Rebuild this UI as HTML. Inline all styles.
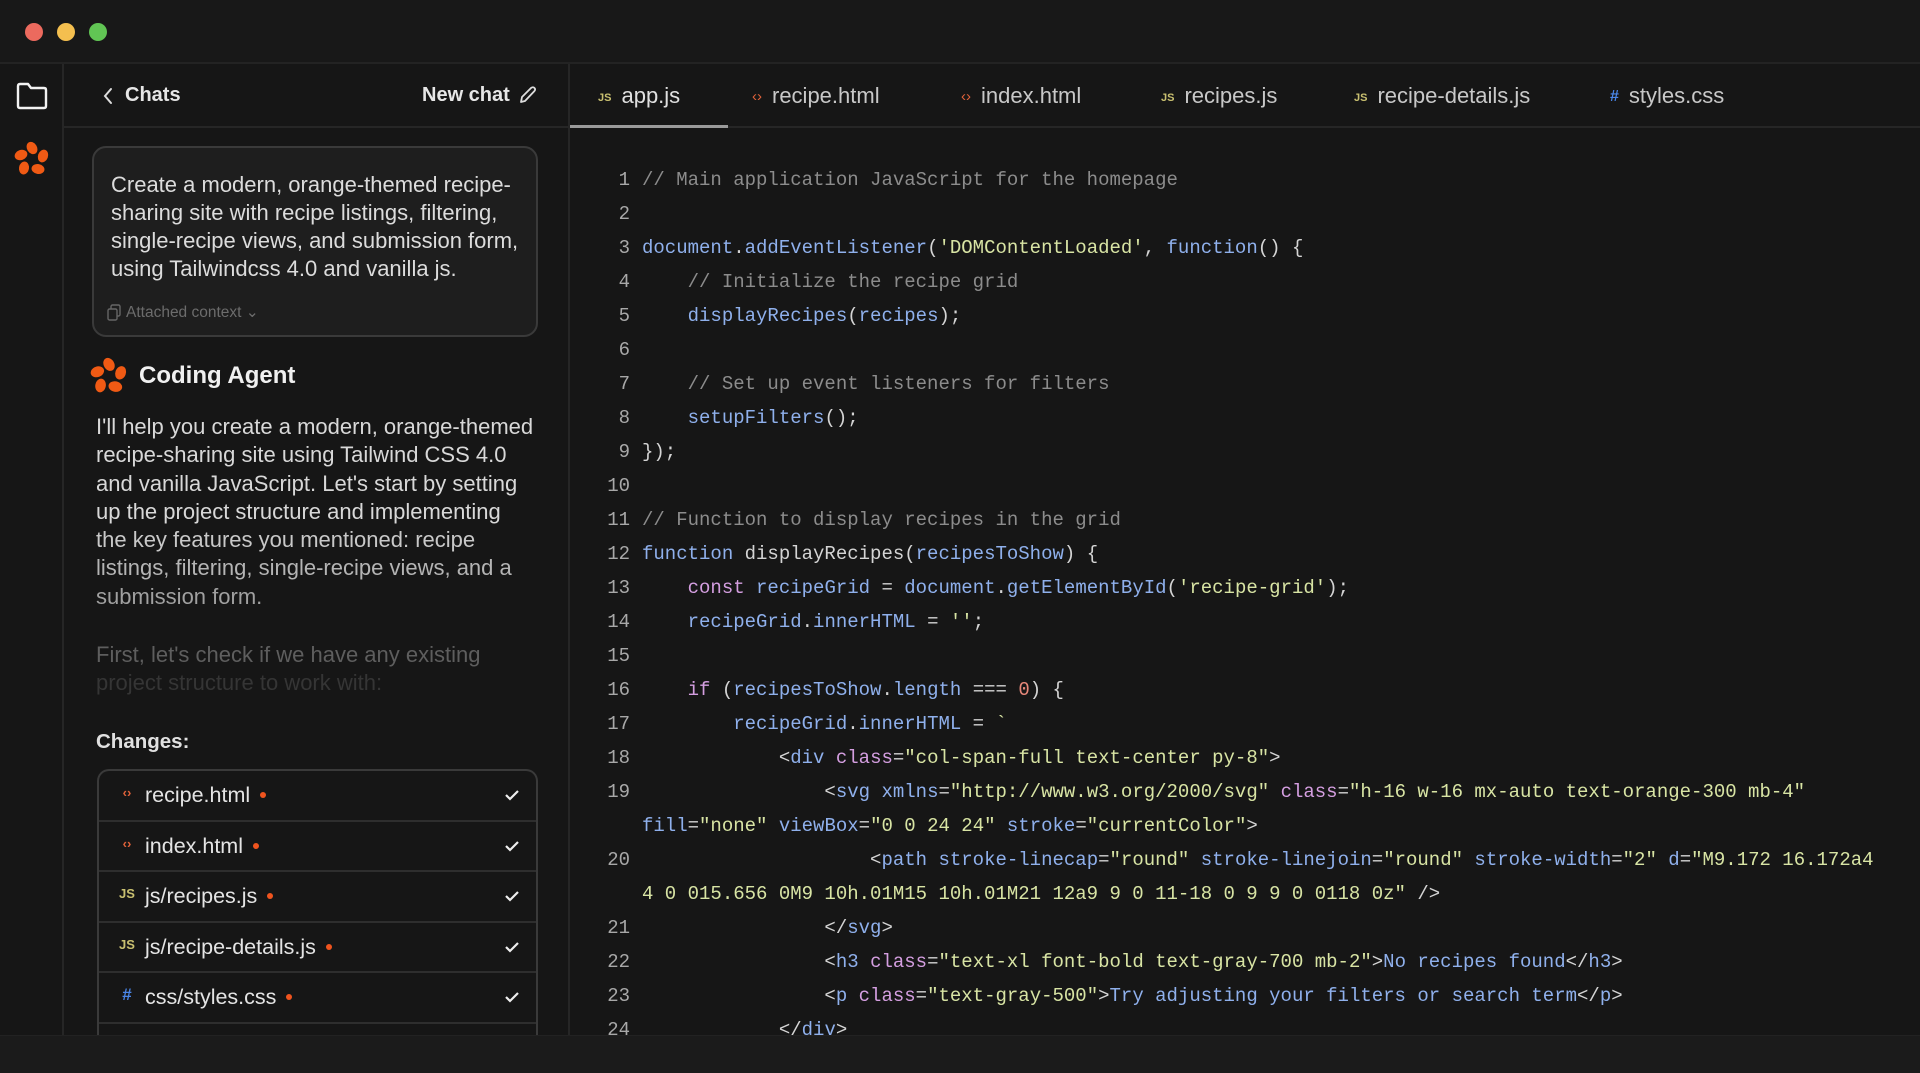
<!DOCTYPE html>
<html><head><meta charset="utf-8"><style>
*{margin:0;padding:0;box-sizing:border-box}
body{width:1920px;height:1073px;background:#161616;overflow:hidden;font-family:"Liberation Sans",sans-serif;color:#e8e8e8;position:relative}
.abs{position:absolute}
.dot{position:absolute;top:23px;width:18px;height:18px;border-radius:50%}
.tab{position:absolute;top:83px;font-size:22px;color:#c8c8c8;white-space:nowrap}
.tab i{font-style:normal;font-size:11px;font-weight:bold;margin-right:10px;vertical-align:2px}
.js{color:#c9c070}.ht{color:#e0623a}.cs{color:#4a86e8}
.code{position:absolute;left:600px;top:163px;font-family:"Liberation Mono",monospace;font-size:19px;line-height:34px;white-space:pre;color:#d4d4d4}
.ln{display:inline-block;width:30px;text-align:right;color:#a8a8a8;margin-right:12px}
.c{color:#8c8c8c}.b{color:#8fb0ec}.s{color:#d8e4a4}.k{color:#d49ee0}.n{color:#e8887a}
.row{position:absolute;left:0;right:0;height:50.5px;border-bottom:2px solid #2e2e2e;font-size:21.5px;color:#e4e4e4}
.row span.ic{position:absolute;left:18px;top:14px;font-size:13px;font-weight:bold;width:20px;text-align:center}
.row span.t{position:absolute;left:46px;top:12px;white-space:nowrap}
.row span.t b{display:inline-block;width:6px;height:6px;border-radius:50%;background:#f0541e;margin-left:10px;vertical-align:4px}
.row svg{position:absolute;right:16px;top:17px}
</style></head><body>
<div class="abs" style="left:0;top:0;width:1920px;height:64px;background:#181818;border-bottom:2px solid #232323"></div>
<div class="dot" style="left:25px;background:#ec6a5e"></div>
<div class="dot" style="left:57px;background:#f4bf4f"></div>
<div class="dot" style="left:89px;background:#61c554"></div>
<div class="abs" style="left:0;top:64px;width:64px;height:971px;border-right:2px solid #262626"></div>
<svg class="abs" style="left:16px;top:82px" width="32" height="28" viewBox="0 0 32 28"><path d="M2 4 Q2 2 4 2 H12 L15 6 H28 Q30 6 30 8 V24 Q30 26 28 26 H4 Q2 26 2 24 Z" fill="none" stroke="#f2f2f2" stroke-width="2.4" stroke-linejoin="round"/></svg>
<svg class="abs" style="left:14px;top:141px" width="36" height="36" viewBox="0 0 36 36" fill="#f05a14">
<ellipse cx="18" cy="7" rx="5" ry="6.5" transform="rotate(-30 18 7)"/>
<ellipse cx="29" cy="15" rx="5" ry="6.5" transform="rotate(20 29 15)"/>
<ellipse cx="24" cy="28" rx="6.5" ry="5" transform="rotate(10 24 28)"/>
<ellipse cx="10" cy="27" rx="5" ry="6.5" transform="rotate(10 10 27)"/>
<ellipse cx="7" cy="14" rx="6.5" ry="5" transform="rotate(-20 7 14)"/>
</svg>
<div class="abs" style="left:64px;top:64px;width:506px;height:971px;border-right:2px solid #262626"></div>
<div class="abs" style="left:64px;top:126px;width:505px;height:2px;background:#262626"></div>
<svg class="abs" style="left:102px;top:86px" width="12" height="20" viewBox="0 0 12 20"><path d="M9 3 L3 10 L9 17" fill="none" stroke="#ddd" stroke-width="2" stroke-linecap="round"/></svg>
<div class="abs" style="left:125px;top:84px;font-size:20px;font-weight:bold;color:#e6e6e6">Chats</div>
<div class="abs" style="left:422px;top:84px;font-size:20px;font-weight:bold;color:#e6e6e6">New chat</div>
<svg class="abs" style="left:517px;top:85px" width="20" height="22" viewBox="0 0 20 22"><path d="M4 17 L5 12 L14 3 Q16 1.5 17.5 3 Q19 4.5 17 6.5 L8 16 Z" fill="none" stroke="#ddd" stroke-width="1.8" stroke-linejoin="round"/></svg>
<div class="abs" style="left:92px;top:146px;width:446px;height:191px;border:2px solid #3a3a3a;border-radius:14px;background:#1e1e1e"></div>
<div class="abs" style="left:111px;top:171px;font-size:22px;line-height:28px;color:#dcdcdc;white-space:nowrap">Create a modern, orange-themed recipe-<br>sharing site with recipe listings, filtering,<br>single-recipe views, and submission form,<br>using Tailwindcss 4.0 and vanilla js.</div>
<svg class="abs" style="left:107px;top:304px" width="14" height="17" viewBox="0 0 14 17"><rect x="4" y="1" width="9" height="11" rx="1.5" fill="none" stroke="#666" stroke-width="1.4"/><rect x="1" y="5" width="9" height="11" rx="1.5" fill="#1e1e1e" stroke="#666" stroke-width="1.4"/></svg>
<div class="abs" style="left:126px;top:303px;font-size:15.5px;color:#6c6c6c">Attached context ⌄</div>
<svg class="abs" style="left:90px;top:357px" width="38" height="38" viewBox="0 0 36 36" fill="#f05a14">
<ellipse cx="18" cy="7" rx="5" ry="6.5" transform="rotate(-30 18 7)"/>
<ellipse cx="29" cy="15" rx="5" ry="6.5" transform="rotate(20 29 15)"/>
<ellipse cx="24" cy="28" rx="6.5" ry="5" transform="rotate(10 24 28)"/>
<ellipse cx="10" cy="27" rx="5" ry="6.5" transform="rotate(10 10 27)"/>
<ellipse cx="7" cy="14" rx="6.5" ry="5" transform="rotate(-20 7 14)"/>
</svg>
<div class="abs" style="left:139px;top:362px;font-size:24px;font-weight:bold;color:#f0f0f0">Coding Agent</div>
<div class="abs" style="left:96px;top:413px;font-size:22px;line-height:28.3px;white-space:nowrap;color:#d8d8d8">I'll help you create a modern, orange-themed<br>recipe-sharing site using Tailwind CSS 4.0<br>and vanilla JavaScript. Let's start by setting<br>up the project structure and implementing<br><span style="color:#c8c8c8">the key features you mentioned: recipe</span><br><span style="color:#b4b4b4">listings, filtering, single-recipe views, and a</span><br><span style="color:#a0a0a0">submission form.</span></div>
<div class="abs" style="left:96px;top:641px;font-size:22px;line-height:28.3px;white-space:nowrap"><span style="color:#5e5e5e">First, let's check if we have any existing</span><br><span style="color:#353535">project structure to work with:</span></div>
<div class="abs" style="left:96px;top:730px;font-size:20.5px;font-weight:bold;color:#e0e0e0">Changes:</div>
<div class="abs" style="left:97px;top:769px;width:441px;height:270px;border:2px solid #3a3a3a;border-bottom:none;border-radius:12px 12px 0 0;overflow:hidden">
<div class="row" style="top:0"><span class="ic ht">‹›</span><span class="t">recipe.html<b></b></span><svg width="16" height="14" viewBox="0 0 16 14"><path d="M2 7 L6 11 L14 3" fill="none" stroke="#eee" stroke-width="2.2"/></svg></div>
<div class="row" style="top:50.5px"><span class="ic ht">‹›</span><span class="t">index.html<b></b></span><svg width="16" height="14" viewBox="0 0 16 14"><path d="M2 7 L6 11 L14 3" fill="none" stroke="#eee" stroke-width="2.2"/></svg></div>
<div class="row" style="top:101px"><span class="ic js">JS</span><span class="t">js/recipes.js<b></b></span><svg width="16" height="14" viewBox="0 0 16 14"><path d="M2 7 L6 11 L14 3" fill="none" stroke="#eee" stroke-width="2.2"/></svg></div>
<div class="row" style="top:151.5px"><span class="ic js">JS</span><span class="t">js/recipe-details.js<b></b></span><svg width="16" height="14" viewBox="0 0 16 14"><path d="M2 7 L6 11 L14 3" fill="none" stroke="#eee" stroke-width="2.2"/></svg></div>
<div class="row" style="top:202px"><span class="ic cs" style="font-size:17px;top:12px">#</span><span class="t">css/styles.css<b></b></span><svg width="16" height="14" viewBox="0 0 16 14"><path d="M2 7 L6 11 L14 3" fill="none" stroke="#eee" stroke-width="2.2"/></svg></div>
</div>
<div class="abs" style="left:570px;top:126px;width:1350px;height:2px;background:#262626"></div>
<div class="abs" style="left:570px;top:125px;width:158px;height:3px;background:#9a9a9a"></div>
<div class="tab" style="left:598px;color:#e0e0e0"><i class="js">JS</i>app.js</div>
<div class="tab" style="left:752px"><i class="ht" style="font-size:15px;font-weight:normal">‹›</i>recipe.html</div>
<div class="tab" style="left:961px"><i class="ht" style="font-size:15px;font-weight:normal">‹›</i>index.html</div>
<div class="tab" style="left:1161px"><i class="js">JS</i>recipes.js</div>
<div class="tab" style="left:1354px"><i class="js">JS</i>recipe-details.js</div>
<div class="tab" style="left:1610px"><i class="cs" style="font-size:16px">#</i>styles.css</div>
<div class="code"><span class="ln">1</span><span class="c">// Main application JavaScript for the homepage</span>
<span class="ln">2</span>
<span class="ln">3</span><span class="b">document</span>.<span class="b">addEventListener</span>(<span class="s">'DOMContentLoaded'</span>, <span class="b">function</span>() {
<span class="ln">4</span>    <span class="c">// Initialize the recipe grid</span>
<span class="ln">5</span>    <span class="b">displayRecipes</span>(<span class="b">recipes</span>);
<span class="ln">6</span>
<span class="ln">7</span>    <span class="c">// Set up event listeners for filters</span>
<span class="ln">8</span>    <span class="b">setupFilters</span>();
<span class="ln">9</span>});
<span class="ln">10</span>
<span class="ln">11</span><span class="c">// Function to display recipes in the grid</span>
<span class="ln">12</span><span class="b">function</span> displayRecipes(<span class="b">recipesToShow</span>) {
<span class="ln">13</span>    <span class="k">const</span> <span class="b">recipeGrid</span> = <span class="b">document</span>.<span class="b">getElementById</span>(<span class="s">'recipe-grid'</span>);
<span class="ln">14</span>    <span class="b">recipeGrid</span>.<span class="b">innerHTML</span> = <span class="s">''</span>;
<span class="ln">15</span>
<span class="ln">16</span>    <span class="k">if</span> (<span class="b">recipesToShow</span>.<span class="b">length</span> === <span class="n">0</span>) {
<span class="ln">17</span>        <span class="b">recipeGrid</span>.<span class="b">innerHTML</span> = <span class="s">`</span>
<span class="ln">18</span>            &lt;<span class="b">div</span> <span class="k">class</span>=<span class="s">"col-span-full text-center py-8"</span>&gt;
<span class="ln">19</span>                &lt;<span class="b">svg</span> <span class="b">xmlns</span>=<span class="s">"http://www.w3.org/2000/svg"</span> <span class="k">class</span>=<span class="s">"h-16 w-16 mx-auto text-orange-300 mb-4"</span>
<span class="ln"></span><span class="b">fill</span>=<span class="s">"none"</span> <span class="b">viewBox</span>=<span class="s">"0 0 24 24"</span> <span class="b">stroke</span>=<span class="s">"currentColor"</span>&gt;
<span class="ln">20</span>                    &lt;<span class="b">path</span> <span class="b">stroke-linecap</span>=<span class="s">"round"</span> <span class="b">stroke-linejoin</span>=<span class="s">"round"</span> <span class="b">stroke-width</span>=<span class="s">"2"</span> <span class="b">d</span>=<span class="s">"M9.172 16.172a4</span>
<span class="ln"></span><span class="s">4 0 015.656 0M9 10h.01M15 10h.01M21 12a9 9 0 11-18 0 9 9 0 0118 0z"</span> /&gt;
<span class="ln">21</span>                &lt;/<span class="b">svg</span>&gt;
<span class="ln">22</span>                &lt;<span class="b">h3</span> <span class="k">class</span>=<span class="s">"text-xl font-bold text-gray-700 mb-2"</span>&gt;<span class="b">No recipes found</span>&lt;/<span class="b">h3</span>&gt;
<span class="ln">23</span>                &lt;<span class="b">p</span> <span class="k">class</span>=<span class="s">"text-gray-500"</span>&gt;<span class="b">Try adjusting your filters or search term</span>&lt;/<span class="b">p</span>&gt;
<span class="ln">24</span>            &lt;/<span class="b">div</span>&gt;</div>
<div class="abs" style="left:0;top:1035px;width:1920px;height:38px;background:#1b1b1b;border-top:1px solid #222"></div>
</body></html>
